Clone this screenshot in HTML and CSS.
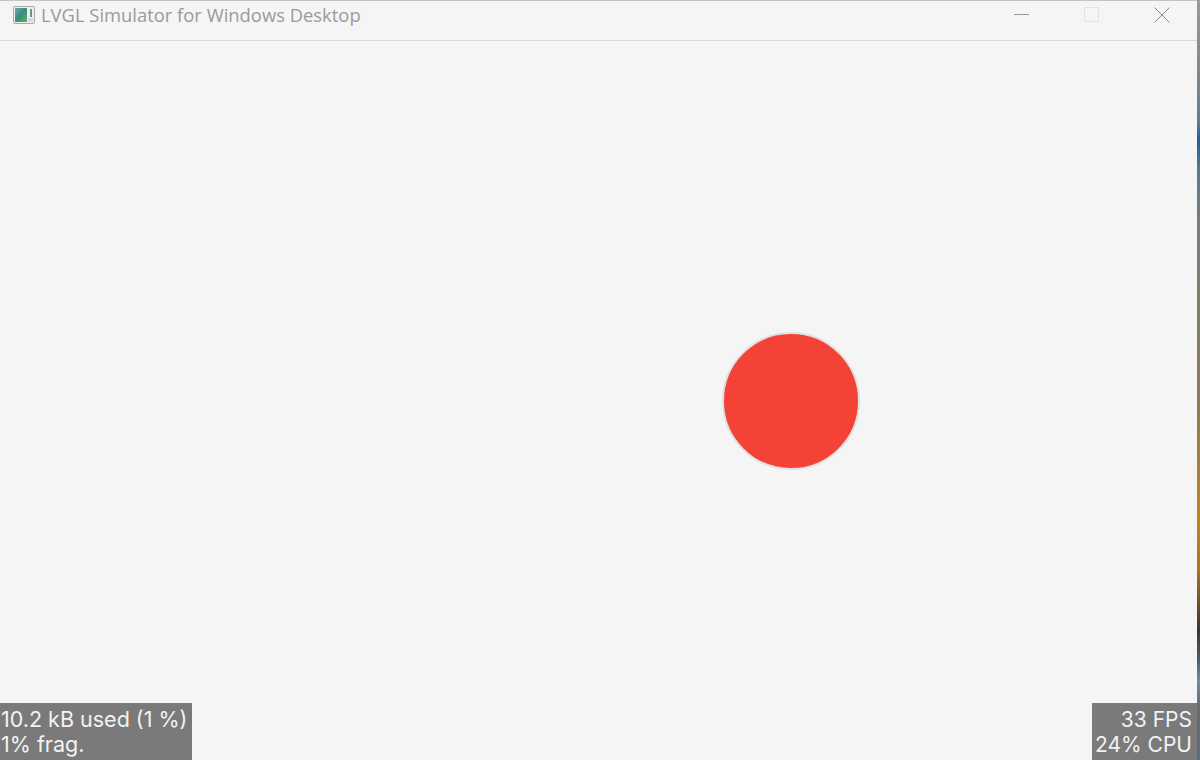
FILE: index.html
```html
<!DOCTYPE html>
<html lang="en">
<head>
    <meta charset="UTF-8">
    <title>LVGL Simulator for Windows Desktop</title>
    <link rel="stylesheet" href="styles.css">
</head>
<body>
    <div class="window">
        <div class="titlebar">
            <svg class="app-icon" width="22" height="18" viewBox="0 0 22 18">
                <defs>
                    <linearGradient id="screen" x1="0" y1="0" x2="1" y2="1">
                        <stop offset="0" stop-color="#6aa6c4"/>
                        <stop offset="0.5" stop-color="#3a8f78"/>
                        <stop offset="1" stop-color="#62aa6a"/>
                    </linearGradient>
                </defs>
                <rect x="0.5" y="0.5" width="21" height="17" rx="1.5" fill="#f0f0f0" stroke="#a8a8a8"/>
                <rect x="2" y="2" width="12" height="14" fill="url(#screen)"/>
                <rect x="17" y="3" width="2" height="8" fill="#5f9a88"/>
                <rect x="15" y="12" width="5" height="4" fill="#d8d8d8"/>
            </svg>
            <span class="title">LVGL Simulator for Windows Desktop</span>
            <div class="controls">
                <button type="button" class="ctl">
                    <svg width="16" height="16" viewBox="0 0 16 16"><path d="M0 7.5H15" stroke="#999" fill="none"/></svg>
                </button>
                <button type="button" class="ctl">
                    <svg width="16" height="16" viewBox="0 0 16 16"><rect x="0.5" y="0.5" width="14" height="14" stroke="#e3e3e3" fill="none"/></svg>
                </button>
                <button type="button" class="ctl">
                    <svg width="16" height="16" viewBox="0 0 16 16"><path d="M0.5 0.5L15.5 15.5M15.5 0.5L0.5 15.5" stroke="#8c8c8c" fill="none"/></svg>
                </button>
            </div>
        </div>
        <div class="screen">
            <div class="ball"></div>
            <div class="monitor mem">10.2 kB used (1 %)<br>1% frag.</div>
            <div class="monitor perf">33 FPS<br>24% CPU</div>
        </div>
    </div>
    <div class="desktop"></div>
</body>
</html>
```

FILE: styles.css
```css
body {
    display: flex;
    margin: 0;
    height: 760px;
    overflow: hidden;
    background-color: #f5f5f5;
    font-family: "Open Sans", "Liberation Sans", sans-serif;
}

.window {
    display: flex;
    flex-direction: column;
    flex: 1;
    min-width: 0;
}

.titlebar {
    display: flex;
    align-items: center;
    height: 39px;
    flex-shrink: 0;
    padding-left: 13px;
    border-top: 1px solid #c4c4c4;
    border-bottom: 1px solid #dadada;
}

.app-icon {
    margin-bottom: 12px;
}

.title {
    margin-left: 6px;
    margin-bottom: 13px;
    font-size: 18.4px;
    color: #9a9a9a;
    white-space: nowrap;
}

.controls {
    display: flex;
    margin-left: auto;
    margin-right: 0;
    margin-bottom: 11px;
}

.ctl {
    display: flex;
    justify-content: center;
    align-items: center;
    width: 70px;
    height: 30px;
    padding: 0;
    border: none;
    background: none;
}

.screen {
    position: relative;
    flex: 1;
}

.ball {
    position: absolute;
    left: 722px;
    top: 291px;
    width: 134px;
    height: 134px;
    background-color: #f44336;
    border: 2px solid #e0e0e0;
    border-radius: 50%;
}

.monitor {
    position: absolute;
    bottom: 0;
    height: 57px;
    box-sizing: border-box;
    padding-top: 4px;
    background-color: #7a7a7a;
    color: #f2f2f2;
    font-family: "Inter", "Open Sans", sans-serif;
    font-size: 21.5px;
    line-height: 25px;
    white-space: nowrap;
}

.mem {
    left: 0;
    width: 192px;
    padding-left: 1px;
}

.perf {
    right: 0;
    width: 105px;
    padding-right: 5px;
    font-size: 21px;
    text-align: right;
}

.desktop {
    width: 3px;
    flex-shrink: 0;
    background: linear-gradient(to bottom, #9a9a90 0, #8a8a84 60px, #5f7f98 120px, #1f5f96 140px, #5a7a90 170px, #7d7d78 230px, #8a7a58 400px, #c0841e 520px, #a87420 570px, #3e332c 630px, #4a5c6a 660px, #6f8aa6 680px, #6a6a68 710px, #5a6a80 760px);
}
```
